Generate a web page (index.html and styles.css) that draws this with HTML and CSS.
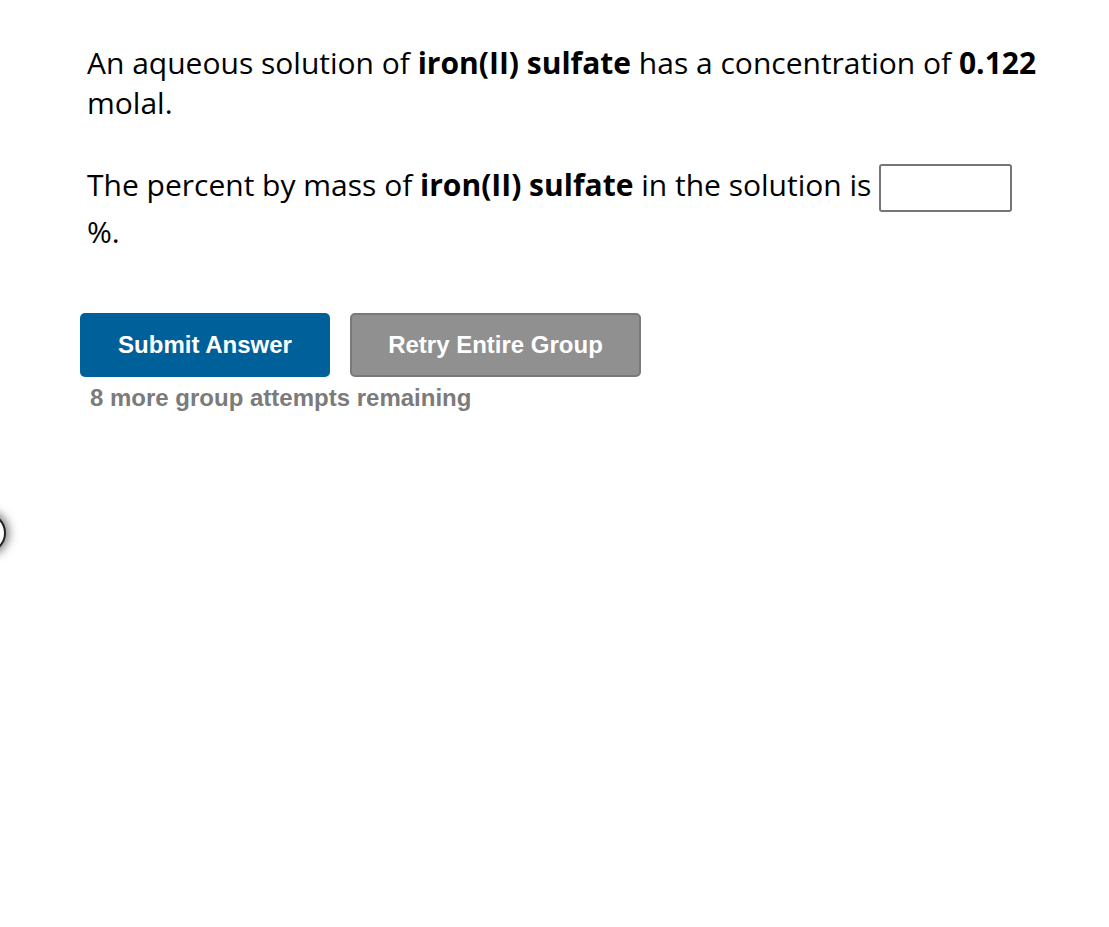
FILE: index.html
```html
<!DOCTYPE html>
<html>
<head>
<meta charset="utf-8">
<link rel="stylesheet" href="styles.css">
</head>
<body>
<div class="page">
  <p class="q">An aqueous solution of <b>iron(II) sulfate</b> has a concentration of <b>0.122</b> molal.</p>
  <p class="q q2">The percent by mass of <b>iron(II) sulfate</b> in the solution is <span class="answer"></span> %.</p>
  <div class="actions">
    <button class="btn submit">Submit Answer</button>
    <button class="btn retry">Retry Entire Group</button>
  </div>
  <div class="remaining">8 more group attempts remaining</div>
</div>
<div class="edge-knob"></div>
</body>
</html>
```

FILE: styles.css
```css
html, body {
  margin: 0;
  padding: 0;
  background: #fff;
}
.page {
  padding: 43px 0 0 87px;
  width: 960px;
  font-family: "Open Sans", "Liberation Sans", sans-serif;
  color: #000;
}
.q {
  margin: 0;
  font-size: 30px;
  line-height: 40px;
}
.q b {
  font-weight: 700;
}
.q2 {
  margin-top: 41px;
}
.answer {
  display: inline-block;
  vertical-align: middle;
  width: 129px;
  height: 44px;
  border: 2px solid #767676;
  border-radius: 3px;
  box-sizing: content-box;
}
.actions {
  display: flex;
  gap: 20px;
  margin-top: 61px;
  margin-left: -7px;
}
.btn {
  font-family: "Liberation Sans", Arial, sans-serif;
  font-weight: 700;
  font-size: 24px;
  color: #fff;
  height: 64px;
  border-radius: 5px;
  padding: 0;
  cursor: pointer;
}
.submit {
  width: 250px;
  background: #00619a;
  border: none;
}
.retry {
  width: 291px;
  background: #909090;
  border: 2px solid #7a7a7a;
}
.remaining {
  font-family: "Liberation Sans", Arial, sans-serif;
  font-weight: 700;
  font-size: 24px;
  color: #7b7b7b;
  margin-top: 7px;
  margin-left: 3px;
}
.edge-knob {
  position: fixed;
  left: -34px;
  top: 513px;
  width: 36px;
  height: 36px;
  border-radius: 50%;
  background: #fff;
  border: 2px solid #222;
  box-shadow: 0 0 10px 3px rgba(0,0,0,0.5);
}
```
